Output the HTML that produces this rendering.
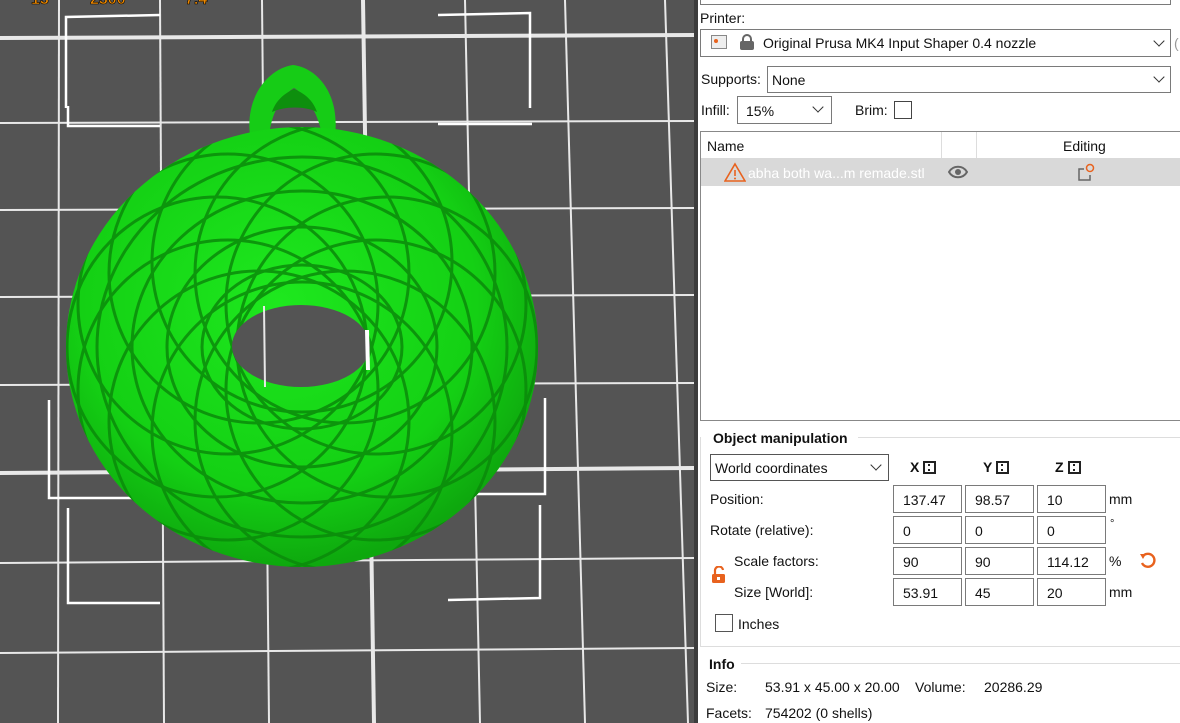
<!DOCTYPE html>
<html><head><meta charset="utf-8"><style>
*{box-sizing:border-box;margin:0;padding:0}
body{width:1180px;height:723px;overflow:hidden;background:#fff;font-family:"Liberation Sans",sans-serif;font-size:14px;color:#111;position:relative}
.vp{position:absolute;left:0;top:0;width:694px;height:723px;background:#545454;overflow:hidden}
.panel{position:absolute;left:694px;top:0;width:486px;height:723px;background:#fff;border-left:4px solid #3c3c3c}
.a{position:absolute;white-space:nowrap}
.box{position:absolute;border:1px solid #7a7a7a;background:#fff}
.chev{position:absolute;width:8px;height:8px;border-right:1.5px solid #333;border-bottom:1.5px solid #333;transform:rotate(45deg)}
.in{position:absolute;border:1px solid #7a7a7a;background:#fff;height:28px;padding:6px 0 0 9px;font-size:14px}
.xyz{position:absolute;font-weight:bold;font-size:14px}
.xyz span{display:inline-block;width:13px;height:13px;border:2px solid #222;vertical-align:-2px;margin-left:4px;position:relative}
.xyz span:after{content:"";position:absolute;left:3px;top:1px;width:3px;height:7px;border-left:2px dotted #222}
</style></head><body>
<div class="vp">
<svg width="694" height="723" style="position:absolute;left:0;top:0">
<defs>
<radialGradient id="g" cx="0.45" cy="0.4" r="0.6"><stop offset="0" stop-color="#1ee81e"/><stop offset="0.7" stop-color="#14d014"/><stop offset="1" stop-color="#0ea80e"/></radialGradient>
<clipPath id="c"><ellipse cx="302" cy="347" rx="236" ry="220"/></clipPath>
</defs>
<g stroke="#e8e8e8" stroke-width="2" fill="none">
<line x1="59" y1="0" x2="58" y2="723"/><line x1="160" y1="0" x2="164" y2="723"/><line x1="262" y1="0" x2="269" y2="723"/>
<line x1="363" y1="0" x2="374" y2="723" stroke-width="4"/><line x1="465" y1="0" x2="480" y2="723"/><line x1="565" y1="0" x2="585" y2="723"/><line x1="665" y1="0" x2="688" y2="723"/>
<line x1="0" y1="38" x2="694" y2="35" stroke-width="4"/><line x1="0" y1="123" x2="694" y2="121"/><line x1="0" y1="210" x2="694" y2="208"/>
<line x1="0" y1="297" x2="694" y2="295"/><line x1="0" y1="385" x2="694" y2="383"/><line x1="0" y1="473" x2="694" y2="468" stroke-width="4"/>
<line x1="0" y1="563" x2="694" y2="558"/><line x1="0" y1="653" x2="694" y2="648"/>
</g>
<g stroke="#fff" stroke-width="2.5" fill="none">
<polyline points="160,15 66,17 66,108"/><polyline points="68,106 68,126 160,126"/>
<polyline points="438,15 530,13 530,108"/><polyline points="438,124 532,124"/>
<polyline points="49,400 49,498 160,498"/><polyline points="68,508 68,603 160,603"/>
<polyline points="450,494 545,494 545,398"/><polyline points="448,600 540,598 540,505"/>
</g>
<path d="M250,135 C245,95 270,68 293,65 C318,68 340,95 335,135 L322,135 C318,112 306,95 294,88 C282,95 272,112 269,135Z" fill="#16cc16"/>
<path d="M272,112 C276,100 285,93 294,89 C304,93 313,100 317,112 C305,106 285,106 272,112Z" fill="#0d8f0d"/>
<ellipse cx="302" cy="347" rx="236" ry="220" fill="url(#g)"/>
<g clip-path="url(#c)" stroke="#0b8a0b" stroke-width="3" fill="none" opacity=".85">
<circle cx="387" cy="347" r="150"/><circle cx="376" cy="390" r="150"/><circle cx="345" cy="421" r="150"/><circle cx="302" cy="432" r="150"/><circle cx="259" cy="421" r="150"/><circle cx="228" cy="390" r="150"/><circle cx="217" cy="347" r="150"/><circle cx="228" cy="304" r="150"/><circle cx="259" cy="273" r="150"/><circle cx="302" cy="262" r="150"/><circle cx="345" cy="273" r="150"/><circle cx="376" cy="304" r="150"/>
<ellipse cx="302" cy="347" rx="205" ry="190"/><ellipse cx="302" cy="347" rx="170" ry="156"/><ellipse cx="302" cy="347" rx="135" ry="120"/><ellipse cx="302" cy="347" rx="100" ry="82"/>
</g>
<ellipse cx="301" cy="346" rx="69" ry="41" fill="#545454"/>
<line x1="264" y1="306" x2="265" y2="387" stroke="#e8e8e8" stroke-width="2"/>
<line x1="367" y1="330" x2="368" y2="370" stroke="#fff" stroke-width="4"/>
<g font-family="Liberation Sans" font-weight="bold" font-size="16" fill="#f08a00" stroke="#000" stroke-width=".6">
<text x="31" y="4">13</text><text x="90" y="4">2300</text><text x="185" y="4">7.4</text>
</g>
</svg>
</div>
<div class="panel"></div>
<div class="box" style="left:700px;top:-10px;width:471px;height:15px"></div>
<div class="a" style="left:700px;top:10px">Printer:</div>
<div class="box" style="left:700px;top:29px;width:471px;height:28px"></div>
<div class="a" style="left:711px;top:35px;width:16px;height:14px;border:1px solid #888;background:#eee"><div style="position:absolute;left:2px;top:3px;width:4px;height:4px;border-radius:2px;background:#e8621e"></div></div>
<div class="a" style="left:740px;top:34px;width:14px;height:16px"><div style="position:absolute;left:2px;top:0;width:10px;height:9px;border:2.5px solid #666;border-radius:5px 5px 0 0"></div><div style="position:absolute;left:0;top:7px;width:14px;height:9px;background:#666;border-radius:2px"></div></div>
<div class="a" style="left:763px;top:35px">Original Prusa MK4 Input Shaper 0.4 nozzle</div>
<div class="chev" style="left:1155px;top:37px"></div>
<div class="a" style="left:1174px;top:35px;color:#999">(</div>
<div class="a" style="left:701px;top:71px">Supports:</div>
<div class="box" style="left:767px;top:66px;width:404px;height:27px"></div>
<div class="a" style="left:772px;top:72px">None</div>
<div class="chev" style="left:1155px;top:73px"></div>
<div class="a" style="left:701px;top:102px">Infill:</div>
<div class="box" style="left:737px;top:96px;width:95px;height:28px"></div>
<div class="a" style="left:746px;top:103px">15%</div>
<div class="chev" style="left:814px;top:103px"></div>
<div class="a" style="left:855px;top:102px">Brim:</div>
<div class="box" style="left:894px;top:101px;width:18px;height:18px;border-color:#444"></div>
<div class="box" style="left:700px;top:131px;width:481px;height:290px;border-color:#888"></div>
<div class="a" style="left:941px;top:132px;width:1px;height:26px;background:#ddd"></div>
<div class="a" style="left:976px;top:132px;width:1px;height:26px;background:#ddd"></div>
<div class="a" style="left:707px;top:138px">Name</div>
<div class="a" style="left:1063px;top:138px">Editing</div>
<div class="a" style="left:701px;top:158px;width:479px;height:28px;background:#d9d9d9"></div>
<svg class="a" style="left:724px;top:162px" width="22" height="20"><path d="M11,2 L21,19 L1,19Z" fill="none" stroke="#e8621e" stroke-width="1.6"/><line x1="11" y1="8" x2="11" y2="14" stroke="#e8621e" stroke-width="1.6"/><circle cx="11" cy="16.5" r="1" fill="#e8621e"/></svg>
<div class="a" style="left:748px;top:165px;color:#fff">abha both wa...m remade.stl</div>
<svg class="a" style="left:948px;top:164px" width="20" height="16"><path d="M1,8 C5,1 15,1 19,8 C15,15 5,15 1,8Z" fill="none" stroke="#666" stroke-width="2"/><circle cx="10" cy="8" r="3" fill="#666"/></svg>
<svg class="a" style="left:1076px;top:162px" width="20" height="20"><path d="M8,7 H3 V18 H14 V13" fill="none" stroke="#666" stroke-width="1.5"/><circle cx="14" cy="6" r="3.5" fill="none" stroke="#e8621e" stroke-width="1.5"/></svg>
<div class="a" style="left:700px;top:437px;width:1px;height:210px;background:#ddd"></div>
<div class="a" style="left:858px;top:437px;width:322px;height:1px;background:#ddd"></div>
<div class="a" style="left:700px;top:646px;width:480px;height:1px;background:#ddd"></div>
<div class="a" style="left:713px;top:430px;font-weight:bold">Object manipulation</div>
<div class="box" style="left:710px;top:454px;width:179px;height:27px;border-color:#555"></div>
<div class="a" style="left:715px;top:460px">World coordinates</div>
<div class="chev" style="left:872px;top:461px"></div>
<div class="xyz" style="left:910px;top:459px">X<span></span></div>
<div class="xyz" style="left:983px;top:459px">Y<span></span></div>
<div class="xyz" style="left:1055px;top:459px">Z<span></span></div>
<div class="a" style="left:710px;top:491px">Position:</div>
<div class="a" style="left:710px;top:522px">Rotate (relative):</div>
<div class="a" style="left:734px;top:553px">Scale factors:</div>
<div class="a" style="left:734px;top:584px">Size [World]:</div>
<div class="in" style="left:893px;top:485px;width:69px">137.47</div>
<div class="in" style="left:965px;top:485px;width:69px">98.57</div>
<div class="in" style="left:1037px;top:485px;width:69px">10</div>
<div class="in" style="left:893px;top:516px;width:69px">0</div>
<div class="in" style="left:965px;top:516px;width:69px">0</div>
<div class="in" style="left:1037px;top:516px;width:69px">0</div>
<div class="in" style="left:893px;top:547px;width:69px">90</div>
<div class="in" style="left:965px;top:547px;width:69px">90</div>
<div class="in" style="left:1037px;top:547px;width:69px">114.12</div>
<div class="in" style="left:893px;top:578px;width:69px">53.91</div>
<div class="in" style="left:965px;top:578px;width:69px">45</div>
<div class="in" style="left:1037px;top:578px;width:69px">20</div>
<div class="a" style="left:1109px;top:491px">mm</div>
<div class="a" style="left:1110px;top:518px;font-size:11px">°</div>
<div class="a" style="left:1109px;top:553px">%</div>
<div class="a" style="left:1109px;top:584px">mm</div>
<svg class="a" style="left:1138px;top:551px" width="20" height="20"><path d="M5,5 A6.5,6.5 0 1 1 4,12" fill="none" stroke="#e8621e" stroke-width="2.4"/><path d="M2,3 L8,3 L5,8Z" fill="#e8621e"/></svg>
<svg class="a" style="left:711px;top:566px" width="16" height="18"><path d="M4,8 V5 A4,4 0 0 1 12,4" fill="none" stroke="#e8621e" stroke-width="2.2"/><rect x="1" y="8" width="13" height="9" rx="1.5" fill="#e8621e"/><rect x="6" y="11" width="3" height="3" fill="#fff"/></svg>
<div class="box" style="left:715px;top:614px;width:18px;height:18px;border-color:#555"></div>
<div class="a" style="left:738px;top:616px">Inches</div>
<div class="a" style="left:709px;top:656px;font-weight:bold">Info</div>
<div class="a" style="left:741px;top:663px;width:439px;height:1px;background:#ddd"></div>
<div class="a" style="left:706px;top:679px">Size:</div>
<div class="a" style="left:765px;top:679px">53.91 x 45.00 x 20.00</div>
<div class="a" style="left:915px;top:679px">Volume:</div>
<div class="a" style="left:984px;top:679px">20286.29</div>
<div class="a" style="left:706px;top:705px">Facets:</div>
<div class="a" style="left:765px;top:705px">754202 (0 shells)</div>
</body></html>
